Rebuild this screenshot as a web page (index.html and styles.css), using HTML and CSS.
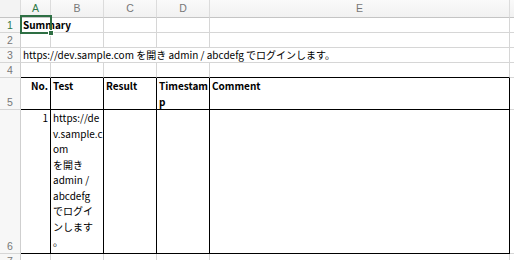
FILE: index.html
```html
<!DOCTYPE html>
<html lang="ja">
<head>
    <meta charset="UTF-8">
    <meta name="viewport" content="width=device-width, initial-scale=1.0">
    <title>Summary</title>
    <link rel="stylesheet" href="styles.css">
</head>
<body>
    <div class="sheet-wrap">
        <table class="sheet">
            <colgroup>
                <col class="w-head">
                <col class="w-a">
                <col class="w-b">
                <col class="w-c">
                <col class="w-d">
                <col class="w-e">
                <col class="w-f">
            </colgroup>
            <tr class="col-head">
                <th class="corner"></th>
                <th class="active">A</th>
                <th>B</th>
                <th>C</th>
                <th>D</th>
                <th>E</th>
                <th></th>
            </tr>
            <tr class="r15">
                <td class="row-head active">1</td>
                <td colspan="2" class="bold mid">Summary</td>
                <td></td>
                <td></td>
                <td></td>
                <td></td>
            </tr>
            <tr class="r15">
                <td class="row-head">2</td>
                <td></td>
                <td></td>
                <td></td>
                <td></td>
                <td></td>
                <td></td>
            </tr>
            <tr class="r15">
                <td class="row-head">3</td>
                <td colspan="5" class="mid">https://dev.sample.com を開き admin / abcdefg でログインします。</td>
                <td></td>
            </tr>
            <tr class="r15">
                <td class="row-head">4</td>
                <td class="above-box"></td>
                <td class="above-box"></td>
                <td class="above-box"></td>
                <td class="above-box"></td>
                <td class="above-box"></td>
                <td></td>
            </tr>
            <tr class="r-head5">
                <td class="row-head">5</td>
                <td class="box bold right">No.</td>
                <td class="box bold">Test</td>
                <td class="box bold">Result</td>
                <td class="box bold">Timestam<br>p</td>
                <td class="box bold">Comment</td>
                <td></td>
            </tr>
            <tr class="r-body6">
                <td class="row-head">6</td>
                <td class="box right">1</td>
                <td class="box">https://de<br>v.sample.c<br>om<br>を開き<br>admin /<br>abcdefg<br>でログイ<br>ンします<br>。</td>
                <td class="box"></td>
                <td class="box"></td>
                <td class="box"></td>
                <td></td>
            </tr>
            <tr class="r15">
                <td class="row-head">7</td>
                <td></td>
                <td></td>
                <td></td>
                <td></td>
                <td></td>
                <td></td>
            </tr>
        </table>
        <div class="selection"><span class="fill-handle"></span></div>
    </div>
</body>
</html>
```

FILE: styles.css
```css
* { margin: 0; padding: 0; box-sizing: border-box; }
body {
    font-family: "Noto Sans CJK JP", sans-serif;
    font-size: 10px;
    color: #000;
    background-color: #fff;
    overflow: hidden;
}
.sheet-wrap { position: relative; width: 514px; }
.sheet {
    border-collapse: separate; border-spacing: 0; table-layout: fixed; width: 530px;
}
.w-head { width: 21px; }
.w-a { width: 30px; }
.w-b { width: 53px; }
.w-c { width: 53px; }
.w-d { width: 53px; }
.w-e { width: 300px; }
.w-f { width: 20px; }

.sheet th, .sheet td {
    border-right: 1px solid #d6d6d6;
    border-bottom: 1px solid #d6d6d6;
    padding: 0 2px;
    white-space: nowrap;
    overflow: visible;
    text-align: left;
    vertical-align: top;
    line-height: 15.5px;
}
.col-head th {
    height: 18px;
    background: linear-gradient(#fafafa, #f1f1f1);
    border-bottom-color: #c4c4c4;
    border-right-color: #dcdcdc;
    color: #777;
    font-family: "Liberation Sans", Arial, sans-serif;
    font-size: 10.5px;
    font-weight: normal;
    text-align: center;
    vertical-align: middle;
    line-height: 17px;
}
.col-head .corner { background: #f3f3f3; }
.col-head .active { color: #2f7a48; }

.r15 { height: 15px; }
.r-head5 { height: 32px; }
.r-body6 { height: 144px; }

.sheet .row-head {
    background-color: #f7f7f7;
    border-right-color: #cfcfcf;
    color: #777;
    font-family: "Liberation Sans", Arial, sans-serif;
    font-size: 10.5px;
    text-align: center;
    vertical-align: bottom;
    line-height: 14px;
    padding: 0;
}
.sheet .row-head.active { color: #2f7a48; vertical-align: middle; }

.sheet .mid { vertical-align: middle; line-height: 14px; }
.bold { font-weight: bold; }
.sheet .right { text-align: right; }

.sheet .above-box { border-bottom-color: #000; }
.sheet .box { border-right-color: #000; border-bottom-color: #000; }

.selection {
    position: absolute;
    left: 20px; top: 15px;
    width: 32px; height: 19px;
    border: 2px solid #2e6f44;
}
.fill-handle {
    position: absolute;
    right: -4px; bottom: -4px;
    width: 6px; height: 6px;
    background-color: #2e6f44;
    border: 1px solid #fff;
}
```
